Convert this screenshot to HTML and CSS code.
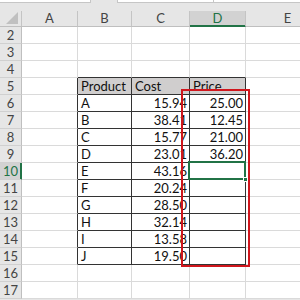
FILE: index.html
```html
<!DOCTYPE html>
<html>
<head>
  <title>Product prices</title>
  <link rel="stylesheet" href="styles.css">
</head>
<body>
  <div class="sheet">
    <div class="fbar">
      <div class="namebox"></div>
      <div class="formula"><span class="split"></span></div>
    </div>
    <table class="grid">
      <colgroup>
        <col class="c-rh"><col class="c-a"><col class="c-b"><col class="c-c"><col class="c-d"><col class="c-e">
      </colgroup>
      <tr class="heads">
        <th class="corner"><span class="tri"></span></th><th>A</th><th>B</th><th>C</th><th class="on">D</th><th>E</th>
      </tr>
      <tr><td class="rh">2</td><td></td><td></td><td></td><td></td><td></td></tr>
      <tr><td class="rh">3</td><td></td><td></td><td></td><td></td><td></td></tr>
      <tr><td class="rh">4</td><td></td><td class="above"></td><td class="above"></td><td class="above"></td><td></td></tr>
      <tr><td class="rh">5</td><td class="edge"></td><td class="t hd">Product</td><td class="t hd">Cost</td><td class="t hd">Price</td><td></td></tr>
      <tr><td class="rh">6</td><td class="edge"></td><td class="t">A</td><td class="t num">15.94</td><td class="t num">25.00</td><td></td></tr>
      <tr><td class="rh">7</td><td class="edge"></td><td class="t">B</td><td class="t num">38.41</td><td class="t num">12.45</td><td></td></tr>
      <tr><td class="rh">8</td><td class="edge"></td><td class="t">C</td><td class="t num">15.77</td><td class="t num">21.00</td><td></td></tr>
      <tr class="short"><td class="rh">9</td><td class="edge"></td><td class="t">D</td><td class="t num">23.01</td><td class="t num">36.20</td><td></td></tr>
      <tr><td class="rh on">10</td><td class="edge"></td><td class="t">E</td><td class="t num">43.16</td><td class="t sel"><span class="handle"></span></td><td></td></tr>
      <tr><td class="rh">11</td><td class="edge"></td><td class="t">F</td><td class="t num">20.24</td><td class="t"></td><td></td></tr>
      <tr><td class="rh">12</td><td class="edge"></td><td class="t">G</td><td class="t num">28.50</td><td class="t"></td><td></td></tr>
      <tr class="short"><td class="rh">13</td><td class="edge"></td><td class="t">H</td><td class="t num">32.14</td><td class="t"></td><td></td></tr>
      <tr><td class="rh">14</td><td class="edge"></td><td class="t">I</td><td class="t num">13.58</td><td class="t"></td><td></td></tr>
      <tr><td class="rh">15</td><td class="edge"></td><td class="t">J</td><td class="t num">19.50</td><td class="t"></td><td></td></tr>
      <tr><td class="rh">16</td><td></td><td></td><td></td><td></td><td></td></tr>
      <tr><td class="rh">17</td><td></td><td></td><td></td><td></td><td></td></tr>
    </table>
    <div class="mark"></div>
  </div>
</body>
</html>
```

FILE: styles.css
```css
body {
  margin: 0;
  background: #fff;
  font-family: Lato, "Liberation Sans", Arial, sans-serif;
  overflow: hidden;
}
.sheet {
  position: relative;
  width: 300px;
  height: 300px;
  overflow: hidden;
  background: #e6e6e6;
}
.fbar {
  display: flex;
  height: 3px;
  margin-bottom: 8px;
}
.namebox {
  width: 90px;
  background: #fff;
  border-right: 1px solid #c6c6c6;
  border-bottom: 1px solid #c6c6c6;
}
.formula {
  margin-left: 26px;
  flex: 1;
  background: #fff;
  border-left: 1px solid #c6c6c6;
  border-bottom: 1px solid #c6c6c6;
  position: relative;
}
.split {
  position: absolute;
  left: 95px;
  top: 0;
  width: 1px;
  height: 3px;
  background: #c6c6c6;
}
.grid {
  border-collapse: separate;
  border-spacing: 0;
  table-layout: fixed;
  width: 330px;
  background: #fff;
}
.c-rh { width: 22px; }
.c-a { width: 56px; }
.c-b { width: 54px; }
.c-c { width: 58px; }
.c-d { width: 56px; }
.c-e { width: 84px; }

th {
  height: 15px;
  padding: 0;
  background: #e6e6e6;
  border-right: 1px solid #c4c4c4;
  border-bottom: 1px solid #bfbfbf;
  font-weight: normal;
  font-size: 13px;
  line-height: 15px;
  color: #444;
  text-align: center;
}
th.on {
  background: #d2d2d2;
  color: #217346;
  border-bottom: 1px solid #217346;
  box-shadow: inset 0 -1px 0 #217346;
}
.corner {
  position: relative;
}
.tri {
  position: absolute;
  right: 3px;
  bottom: 2px;
  width: 0;
  height: 0;
  border-left: 12px solid transparent;
  border-bottom: 12px solid #c0c0c0;
}
td {
  height: 16px;
  padding: 0 2px 0 3px;
  border-right: 1px solid #dadada;
  border-bottom: 1px solid #dadada;
  font-size: 13px;
  line-height: 16px;
  color: #111;
  white-space: nowrap;
  overflow: hidden;
}
.short td {
  height: 15px;
}
td.rh {
  padding: 0;
  background: #e6e6e6;
  border-right: 1px solid #bfbfbf;
  border-bottom: 1px solid #d0d0d0;
  text-align: center;
  color: #444;
}
td.rh.on {
  background: #d2d2d2;
  color: #217346;
  border-right: 1px solid #217346;
  box-shadow: inset -1px 0 0 #217346;
}
td.edge {
  border-right-color: #333;
}
td.above {
  border-bottom-color: #333;
}
td.t {
  border-right-color: #333;
  border-bottom-color: #333;
}
td.hd {
  background: #d0cece;
}
td.num {
  text-align: right;
}
td.sel {
  position: relative;
  overflow: visible;
}
td.sel::after {
  content: "";
  position: absolute;
  left: -2px;
  top: -2px;
  right: -1px;
  bottom: -1px;
  border: 2px solid #217346;
}
.handle {
  position: absolute;
  right: -3px;
  bottom: -3px;
  width: 5px;
  height: 5px;
  background: #217346;
  border: 1px solid #fff;
  box-sizing: border-box;
  z-index: 2;
}
.mark {
  position: absolute;
  left: 181px;
  top: 89px;
  width: 65px;
  height: 174px;
  border: 2px solid #d0161d;
}
```
